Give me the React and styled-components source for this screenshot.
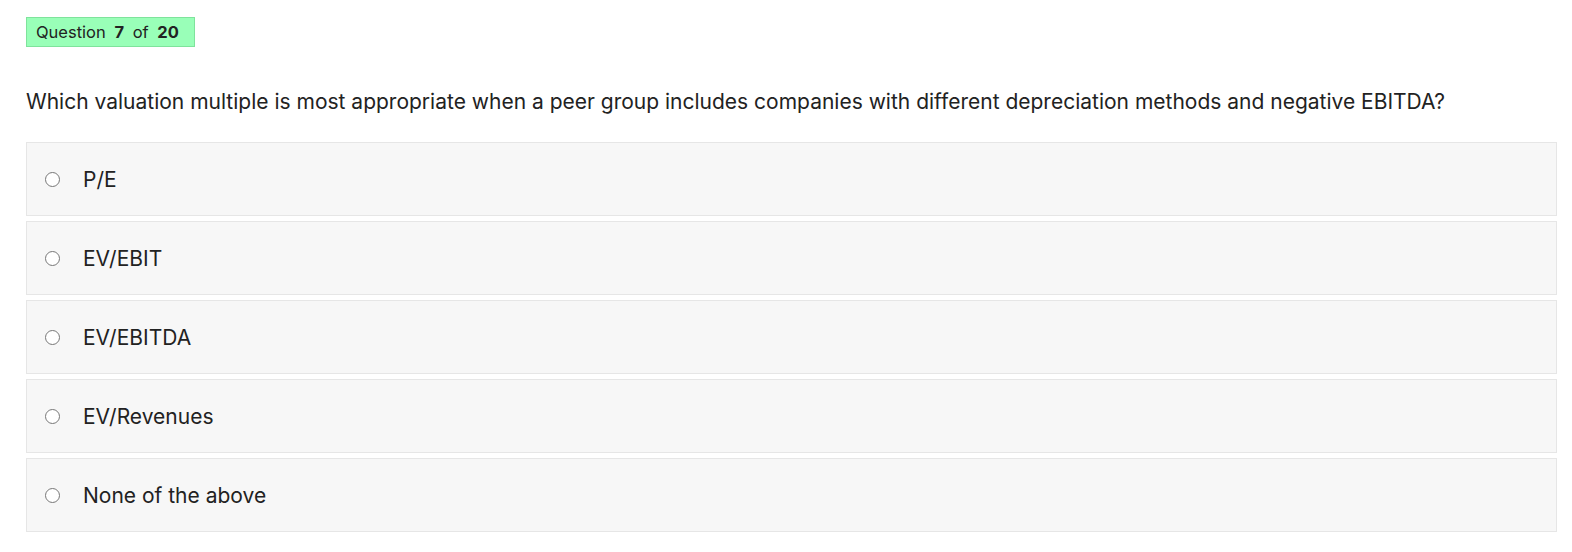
import React from "react"
import styled, { createGlobalStyle } from "styled-components"

const GlobalStyle = createGlobalStyle`
  body {
    margin: 0;
    background: #fff;
    font-family: Inter, "Noto Sans", sans-serif;
    color: #222;
  }
`

const options = ["P/E", "EV/EBIT", "EV/EBITDA", "EV/Revenues", "None of the above"]

const App = () => (
  <>
    <GlobalStyle />
    <QuizContainer>
      <Badge>
        Question <Num>7</Num> of <Num>20</Num>
      </Badge>
      <QuestionText>
        Which valuation multiple is most appropriate when a peer group includes
        companies with different depreciation methods and negative EBITDA?
      </QuestionText>
      <OptionList>
        {options.map((opt) => (
          <Option key={opt}>
            <Radio type="radio" name="answer" />
            <span>{opt}</span>
          </Option>
        ))}
      </OptionList>
    </QuizContainer>
  </>
)

export default App

const QuizContainer = styled.div`
  padding: 17px 15px 20px 26px;
`

const Badge = styled.div`
  display: inline-block;
  height: 30px;
  line-height: 28px;
  box-sizing: border-box;
  padding: 0 11px 0 9px;
  background: #99ffb8;
  border: 1px solid #7fe39c;
  font-size: 16.5px;
  color: #222;
`

const Num = styled.b`
  font-weight: 700;
  margin: 0 4px;
`

const QuestionText = styled.p`
  margin: 40px 0 25px;
  font-size: 21px;
  line-height: 30px;
  color: #222;
`

const OptionList = styled.div`
  display: flex;
  flex-direction: column;
  gap: 5px;
`

const Option = styled.label`
  display: flex;
  align-items: center;
  height: 74px;
  box-sizing: border-box;
  padding-left: 18px;
  background: #f7f7f7;
  border: 1px solid #e6e6e6;
  font-size: 21px;
  color: #222;
  cursor: pointer;
`

const Radio = styled.input`
  appearance: none;
  width: 15px;
  height: 15px;
  margin: 0 23px 0 0;
  border: 1px solid #777;
  border-radius: 50%;
  background: #fff;
  flex-shrink: 0;
`
